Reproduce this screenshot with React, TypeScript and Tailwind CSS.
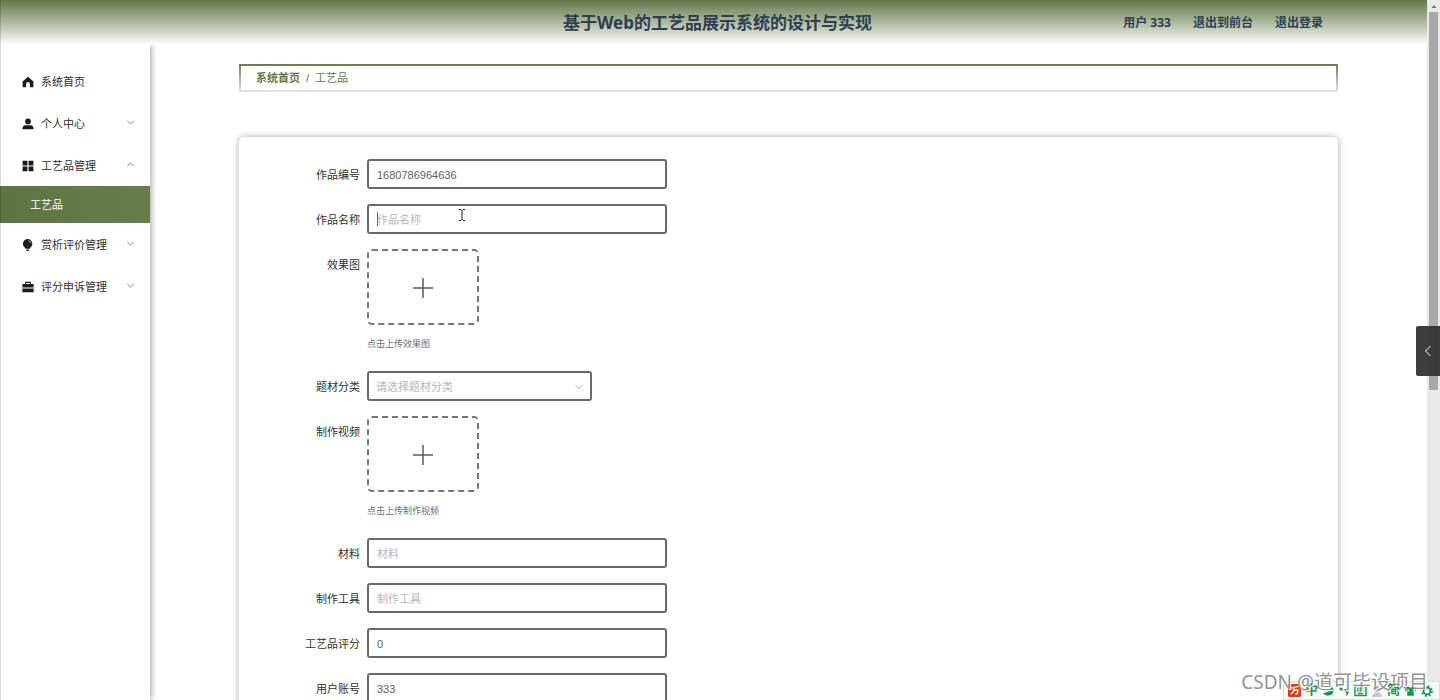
import type { ReactNode } from "react";

const menuIcons: Record<string, ReactNode> = {
	home: <path d="M8 1 .8 7.200v7.800h4.700v-4.500a2.500 2.500 0 0 1 5 0V15h4.700V7.200z" />,
	user: (
		<>
			<circle cx="8" cy="4.600" r="3.800" />
			<path d="M.5 15c0-4 1.800-5.400 4-5.400h7c2.200 0 4 1.400 4 5.400z" />
		</>
	),
	grid: <path d="M.8 1h6.400v6.200H.8zM8.800 1h6.400v6.200H8.800zM.8 8.800h6.400V15H.8zM8.800 8.800h6.400V15H8.800z" />,
	bulb: (
		<>
			<path d="M7.500 0A6.300 6.300 0 0 0 1.200 6.300c0 2.700 2.300 4.500 3.600 6.700h5.400c1.300-2.200 3.600-4 3.600-6.700A6.300 6.300 0 0 0 7.500 0z" />
			<path d="M5.500 14h4l-.8 2H6.300z" />
			<path d="M8.500 2.400c1.700.3 2.900 1.600 3.100 3.200" fill="none" stroke="white" strokeWidth="1" />
		</>
	),
	briefcase: (
		<path d="M4.200 4V1h7.600v3H15.500v4.700H.5V4zM5.700 4h4.600V2.500H5.700zM.5 9.900h15V15H.5z" fillRule="evenodd" />
	),
};

const menu = [
	{ title: "系统首页", icon: "home", children: null, open: false },
	{ title: "个人中心", icon: "user", children: [], open: false },
	{ title: "工艺品管理", icon: "grid", children: ["工艺品"], open: true },
	{ title: "赏析评价管理", icon: "bulb", children: [], open: false },
	{ title: "评分申诉管理", icon: "briefcase", children: [], open: false },
];

const Chevron = ({ className, up = false }: { className: string; up?: boolean }) => (
	<svg viewBox="0 0 10 10" className={className} fill="none" stroke="currentColor">
		<path d={up ? "M1.500 6.800 5 3.300l3.500 3.500" : "M1.500 3.300 5 6.800l3.500-3.500"} />
	</svg>
);

const Header = () => (
	<header className="relative z-10 grid h-[45px] shrink-0 grid-cols-[1fr_auto_1fr] items-center bg-linear-to-b from-[#64784a] to-white pr-[104px] font-bold text-[#2f3e50]">
		<h1 className="col-start-2 pl-[112px] text-[17px]">基于Web的工艺品展示系统的设计与实现</h1>
		<nav className="flex justify-end gap-[22px] text-xs">
			<span>用户 333</span>
			<a href="#front">退出到前台</a>
			<a href="#logout">退出登录</a>
		</nav>
	</header>
);

const Sidebar = () => (
	<aside className="w-[150px] shrink-0 bg-white pt-[15px] text-[11px] text-[#303133] shadow-[2px_0_5px_rgba(0,0,0,0.3)]">
		<ul>
			{menu.map((item) => (
				<li key={item.title}>
					<button type="button" className="flex h-[42px] w-full items-center pt-0.5 pr-[15px] pl-[22px]">
						<svg viewBox="0 0 16 16" className="size-3 fill-[#1c1c1c]">
							{menuIcons[item.icon]}
						</svg>
						<span className="ml-[7px] flex-1 text-left">{item.title}</span>
						{item.children && (
							<Chevron className="mb-1 size-[9px] text-[#777]" up={item.open} />
						)}
					</button>
					{item.open &&
						item.children?.map((child) => (
							<a
								key={child}
								href="#craft"
								className="flex h-[37px] items-center bg-linear-to-r from-[#5f7443] to-[#687d4c] pt-0.5 pl-[30px] text-white"
							>
								{child}
							</a>
						))}
				</li>
			))}
		</ul>
	</aside>
);

const Row = ({ label, id, children }: { label: string; id: string; children: ReactNode }) => (
	<div className="flex items-start gap-[7px]">
		<label htmlFor={id} className="w-[121px] shrink-0 pt-0.5 text-right text-[11px] leading-7 text-[#303133]">
			{label}
		</label>
		{children}
	</div>
);

const TextField = ({
	label,
	id,
	value,
	focused = false,
}: {
	label: string;
	id: string;
	value?: string;
	focused?: boolean;
}) => (
	<Row label={label} id={id}>
		<div className="relative w-[300px]">
			<input
				id={id}
				type="text"
				defaultValue={value}
				placeholder={label}
				className="block h-[30px] w-full rounded-[3px] border-2 border-[#69696d] bg-white px-2 pt-0.5 text-[11px] text-[#606266] outline-none placeholder:text-[#b4b8bf]"
			/>
			{focused && <span className="absolute top-2 left-2.5 h-3.5 w-px bg-[#666]" />}
			{focused && (
				<svg viewBox="0 0 8 14" className="absolute top-1 left-[91px] h-3.5 w-2" fill="none" stroke="#222">
					<path d="M1 1.500h2l1 1 1-1h2M4 2.500v9M1 12.500h2l1-1 1 1h2" />
				</svg>
			)}
		</div>
	</Row>
);

const UploadField = ({ label, id }: { label: string; id: string }) => (
	<Row label={label} id={id}>
		<div>
			<button
				id={id}
				type="button"
				className="flex h-[76px] w-[112px] items-center justify-center rounded-[5px] border-2 border-dashed border-[#77777b] pt-0.5"
			>
				<svg viewBox="0 0 20 20" className="size-5" fill="none" stroke="#5c5c60" strokeWidth="1.500">
					<path d="M10 0v20M0 10h20" />
				</svg>
			</button>
			<p className="mt-[11px] h-5 text-[9px] leading-4 text-[#66717d]">点击上传{label}</p>
		</div>
	</Row>
);

const SelectField = ({ label, id }: { label: string; id: string }) => (
	<Row label={label} id={id}>
		<div className="relative w-[225px]">
			<select
				id={id}
				defaultValue=""
				className="block h-[30px] w-full appearance-none rounded-[3px] border-2 border-[#69696d] bg-white px-[7px] pt-0.5 text-[11px] text-[#b4b8bf] outline-none"
			>
				<option value="">请选择{label}</option>
			</select>
			<Chevron className="pointer-events-none absolute top-[11px] right-2 size-2.5 text-[#b0b4bb]" />
		</div>
	</Row>
);

const Breadcrumb = () => (
	<nav className="border-2 [border-image:linear-gradient(to_bottom,#6a7d52,#e6e6e6)_2] bg-white">
		<ol className="flex h-6 items-center gap-1.5 pl-[15px] text-[11px] text-[#64784a]">
			<li className="font-bold">
				<a href="#home">系统首页</a>
			</li>
			<li>/</li>
			<li>工艺品</li>
		</ol>
	</nav>
);

const Scrollbar = () => (
	<div className="flex w-[13px] shrink-0 flex-col items-center bg-[#e9e9e9]">
		<svg viewBox="0 0 12 12" className="size-3 shrink-0 fill-[#777]">
			<path d="M3.500 8 6 5l2.500 3z" />
		</svg>
		<div className="h-[54%] w-[9px] bg-[#a8a8a8]" />
	</div>
);

const InputMethodBar = () => (
	<div className="absolute right-0 bottom-0 flex h-[19px] items-center gap-1 rounded-tl-[3px] border border-[#ddd] bg-[#fafafa] pr-1.5 pl-1 font-['Noto_Sans_CJK_SC',sans-serif] text-[13px] leading-[13px] font-bold text-[#0a9a4a]">
		<svg viewBox="0 0 14 14" className="size-[13px]">
			<rect width="14" height="14" rx="2" fill="#e03c0c" />
			<path d="M2.500 4.500l9-2M6.500 3.500c0 3.500-1 6-3.500 7.500M6 7.200l4.500-1c.5 2.500-.5 4.800-2.500 4.800" fill="none" stroke="white" strokeWidth="1.500" />
		</svg>
		<span className="pb-1">中</span>
		<svg viewBox="0 0 12 12" className="size-3 fill-current">
			<path d="M9 1c.2 3.500-2.500 6.500-8 7C4 12 11 11.500 11.500 6c.1-2-.8-4-2.500-5z" />
		</svg>
		<svg viewBox="0 0 12 12" className="size-3 fill-current">
			<circle cx="3" cy="4" r="1.600" />
			<path d="M7 6a2 2 0 1 1 3.500 1.500C10.300 9.500 9 11 7 11.300c1-.8 1.700-1.700 1.700-2.800C7.700 8.300 7 7 7 6z" />
		</svg>
		<svg viewBox="0 0 13 12" className="h-3 w-[13px]" fill="none" stroke="currentColor" strokeWidth="1.400">
			<path d="M1 1.500h11v9H1z" />
			<path d="M3 4h7M3 6h7" strokeDasharray="1.500 1" />
			<path d="M4 8.500h5" />
		</svg>
		<svg viewBox="0 0 12 12" className="size-3 fill-[#c8c8c8]">
			<circle cx="6" cy="4.500" r="3" />
			<path d="M1 12c0-3 2-4.500 5-4.500S11 9 11 12z" />
		</svg>
		<span className="pb-1">简</span>
		<svg viewBox="0 0 14 12" className="h-3 w-[13px] fill-current">
			<path d="M4.500 1 .5 3l1.300 3.200 1.700-.5V11h7V5.700l1.700.5L13.500 3l-4-2C8.500 3 5.500 3 4.500 1z" />
		</svg>
		<svg viewBox="0 0 12 12" className="size-3" fill="none" stroke="currentColor">
			<circle cx="6" cy="6" r="3.400" strokeWidth="1.800" />
			<circle cx="6" cy="6" r="5" strokeWidth="1.600" strokeDasharray="2 1.930" />
		</svg>
	</div>
);

export default function App() {
	return (
		<div className="relative flex h-screen overflow-hidden bg-white font-['Noto_Sans','Noto_Sans_CJK_SC',sans-serif]">
			<div className="flex min-w-0 flex-1 flex-col">
				<Header />
				<div className="flex min-h-0 flex-1 font-['Liberation_Sans','Noto_Sans_CJK_SC',sans-serif]">
					<Sidebar />
					<main className="min-w-0 flex-1 overflow-hidden px-[89px] pt-[19px]">
						<Breadcrumb />
						<form className="mt-[45px] flex flex-col gap-[15px] rounded-[5px] bg-white pt-[22px] pb-[22px] shadow-[0_0_7px_rgba(0,0,0,0.35)]">
							<TextField label="作品编号" id="code" value="1680786964636" />
							<TextField label="作品名称" id="name" focused />
							<UploadField label="效果图" id="image" />
							<SelectField label="题材分类" id="category" />
							<UploadField label="制作视频" id="video" />
							<TextField label="材料" id="material" />
							<TextField label="制作工具" id="tool" />
							<TextField label="工艺品评分" id="score" value="0" />
							<TextField label="用户账号" id="account" value="333" />
						</form>
					</main>
				</div>
			</div>
			<Scrollbar />
			<span className="absolute inset-y-0 left-0 z-20 w-px bg-black/15" />
			<button
				type="button"
				aria-label="展开"
				className="absolute top-[326px] right-0 flex h-[50px] w-6 items-center justify-center rounded-l-[2px] bg-[#333]/95 text-white"
			>
				<svg viewBox="0 0 8 12" className="h-3 w-2" fill="none" stroke="currentColor">
					<path d="M6.500 1 1.500 6l5 5" />
				</svg>
			</button>
			<InputMethodBar />
			<p className="absolute right-3 bottom-1 text-[19px] leading-7 text-[#858585]/90 [text-shadow:1px_1px_0_white]">
				CSDN @道可毕设项目
			</p>
		</div>
	);
}
